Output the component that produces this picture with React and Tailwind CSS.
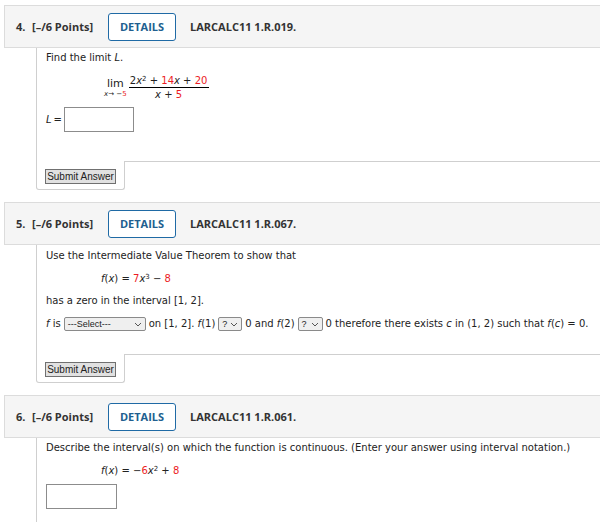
import React from 'react';

const red = 'text-[#ec1c24]';

function Header({ num, code }) {
  return (
    <div className="ml-[4px] flex h-[43px] items-center border-y border-l border-[#dcdcdc] bg-[#f5f5f5] pt-px font-['Open_Sans',sans-serif] text-[11px] font-bold text-[#333]">
      <span className="ml-[11px] w-[16px]">{num}.</span>
      <span>[–/6 Points]</span>
      <span className="ml-[15px] flex h-[28px] w-[68px] items-center justify-center rounded-[3px] border border-[#1f6aa5] bg-white text-[#215f8f]">
        DETAILS
      </span>
      <span className="ml-[14px]">{code}</span>
    </div>
  );
}

function SubmitRow() {
  return (
    <div className="ml-[36px] flex">
      <div className="h-[29px] w-[89px] rounded-b-[3px] border-x border-b border-[#cfcfcf] pl-[8px] pt-[8px]">
        <button className="flex h-[15px] w-[71px] items-center justify-center border border-[#707070] bg-[#e1e1e1] font-['Liberation_Sans',Arial,sans-serif] text-[10px] leading-none text-[#222]">
          Submit Answer
        </button>
      </div>
      <div className="flex-1 border-t border-[#cfcfcf]" />
    </div>
  );
}

function Sel({ label, w }) {
  return (
    <span
      className={`mx-[3px] inline-flex h-[14px] ${w} items-center justify-between rounded-[2px] border border-[#8a8a8a] bg-[#efefef] px-[3px] align-middle font-['Liberation_Sans',Arial,sans-serif] text-[9px] leading-none text-[#222]`}
    >
      <span>{label}</span>
      <svg width="8" height="5" viewBox="0 0 8 5" className="text-[#555]">
        <path d="M1 1l3 3 3-3" fill="none" stroke="currentColor" strokeWidth="1" />
      </svg>
    </span>
  );
}

const I = ({ children }) => <i className="italic">{children}</i>;

export default function App() {
  return (
    <div className="w-[600px] h-[522px] overflow-hidden bg-white pt-[5px] font-['DejaVu_Sans',Verdana,sans-serif] text-[10px] leading-[14px] text-[#222]">
      {/* Question 4 */}
      <Header num="4" code="LARCALC11 1.R.019." />
      <div className="ml-[36px] border-l border-[#cfcfcf] pl-[9px] pt-[3px]">
        <p>
          Find the limit <I>L</I>.
        </p>
        <div className="ml-[58px] mt-[9px] flex items-center">
          <div className="flex flex-col items-center">
            <span className="text-[11px] leading-[12px]">lim</span>
            <span className="text-[7px] leading-[8px]">
              <I>x</I>→ −<span className={red}>5</span>
            </span>
          </div>
          <div className="ml-[2px] flex w-[80px] flex-col items-center">
            <span className="h-[14px] w-full border-b border-black text-center leading-[13px]">
              2<I>x</I>
              <sup className="text-[7px]">2</sup> + <span className={red}>14</span>
              <I>x</I> + <span className={red}>20</span>
            </span>
            <span className="leading-[14px]">
              <I>x</I> + <span className={red}>5</span>
            </span>
          </div>
        </div>
        <div className="mt-[5px] flex items-center">
          <I>L</I>
          <span className="ml-[2px]">=</span>
          <span className="ml-[2px] h-[25px] w-[70px] border border-[#8c8c8c] bg-white" />
        </div>
        <div className="h-[29px]" />
      </div>
      <SubmitRow />

      {/* Question 5 */}
      <div className="mt-[12px]">
        <Header num="5" code="LARCALC11 1.R.067." />
      </div>
      <div className="ml-[36px] border-l border-[#cfcfcf] pl-[9px] pt-[4px]">
        <p>Use the Intermediate Value Theorem to show that</p>
        <p className="ml-[55px] mt-[9px] h-[14px]">
          <I>f</I>(<I>x</I>) = <span className={red}>7</span>
          <I>x</I>
          <sup className="text-[7px]">3</sup> − <span className={red}>8</span>
        </p>
        <p className="mt-[8px]">has a zero in the interval [1, 2].</p>
        <p className="mt-[9px] whitespace-nowrap">
          <I>f</I> is<Sel label="---Select---" w="w-[82px]" />on [1, 2]. <I>f</I>(1)
          <Sel label="?" w="w-[24px]" />0 and <I>f</I>(2)
          <Sel label="?" w="w-[25px]" />0 therefore there exists <I>c</I> in (1, 2) such that{' '}
          <I>f</I>(<I>c</I>) = 0.
        </p>
        <div className="h-[23px]" />
      </div>
      <SubmitRow />

      {/* Question 6 */}
      <div className="mt-[12px]">
        <Header num="6" code="LARCALC11 1.R.061." />
      </div>
      <div className="ml-[36px] h-[200px] border-l border-[#cfcfcf] pl-[9px] pt-[3px]">
        <p>
          Describe the interval(s) on which the function is continuous. (Enter your answer using
          interval notation.)
        </p>
        <p className="ml-[55px] mt-[9px] h-[14px]">
          <I>f</I>(<I>x</I>) = −<span className={red}>6</span>
          <I>x</I>
          <sup className="text-[7px]">2</sup> + <span className={red}>8</span>
        </p>
        <span className="mt-[6px] block h-[25px] w-[71px] border border-[#8c8c8c] bg-white" />
      </div>
    </div>
  );
}
